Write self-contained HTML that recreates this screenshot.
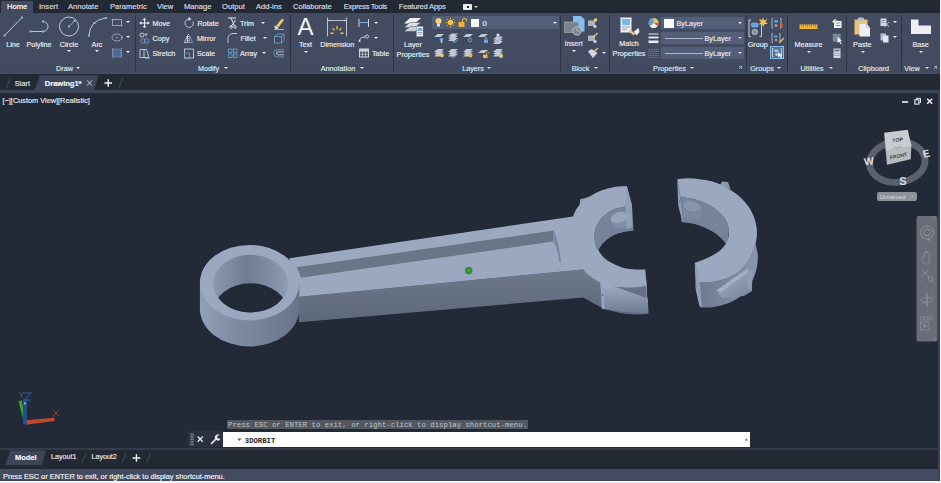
<!DOCTYPE html>
<html><head><meta charset="utf-8"><title>AutoCAD</title>
<style>
html,body{margin:0;padding:0;}
body{width:941px;height:483px;overflow:hidden;background:#222937;position:relative;font-family:"Liberation Sans","DejaVu Sans",sans-serif;color:#e6e9ee;font-size:7.5px;}
.abs{position:absolute;}
.lbl,.txt,.ptitle,#menubar span{-webkit-text-stroke:0.180px currentColor;}
#menubar{left:0;top:0;width:941px;height:13px;background:#222933;}
#menubar span{position:absolute;top:2px;font-size:7.6px;line-height:9px;color:#d6dae0;white-space:nowrap;}
#hometab{left:1px;top:1px;width:32px;height:12px;background:#424b60;}
#ribbon{left:0;top:13px;width:941px;height:61px;background:#424b60;}
#ribtitle{left:0;top:62px;width:941px;height:12px;background:#414a5f;}
.sep{position:absolute;top:15px;width:1px;height:57px;background:#2d3442;}
.lbl{position:absolute;font-size:7.2px;line-height:9px;color:#e6e9ee;white-space:nowrap;transform:translateX(-50%);text-align:center;}
.txt{position:absolute;font-size:7.2px;line-height:9px;color:#e6e9ee;white-space:nowrap;}
.ptitle{position:absolute;top:63.5px;font-size:7.2px;line-height:9px;color:#dfe3e9;white-space:nowrap;transform:translateX(-50%);}
.dds{position:absolute;width:0;height:0;border-left:2px solid transparent;border-right:2px solid transparent;border-top:2.400px solid #f0f2f5;margin-left:-0.400px;margin-top:-0.200px;}
.dd{position:absolute;width:0;height:0;border-left:2px solid transparent;border-right:2px solid transparent;border-top:2.5px solid #e6e9ee;}
#filetabs{left:0;top:74px;width:941px;height:16px;background:#222933;}
#band{left:0;top:90px;width:941px;height:3px;background:#3d4658;}
#viewport{left:0;top:93px;width:938.500px;height:355px;background:#222937;box-sizing:border-box;width:941px;height:356px;}
#layouttabs{left:0;top:450px;width:941px;height:19.500px;background:#222933;}
#status{left:0;top:468.500px;width:941px;height:12.800px;background:#424b5f;}
#whiteline{left:0;top:481.200px;width:941px;height:1.800px;background:#f2f3f5;}
</style></head>
<body>
<!-- MENUBAR -->
<div id="menubar" class="abs">
 <div id="hometab" class="abs"></div>
 <span style="left:7px;color:#fff">Home</span>
 <span style="left:39px">Insert</span>
 <span style="left:68px">Annotate</span>
 <span style="left:110px">Parametric</span>
 <span style="left:157px">View</span>
 <span style="left:184px">Manage</span>
 <span style="left:222px">Output</span>
 <span style="left:256px">Add-ins</span>
 <span style="left:293px">Collaborate</span>
 <span style="left:343.800px;letter-spacing:-0.3px">Express Tools</span>
 <span style="left:398.800px;letter-spacing:-0.2px">Featured Apps</span>
</div>
<!-- RIBBON -->
<div id="ribbon" class="abs"></div>
<div id="ribtitle" class="abs"></div>

<!-- separators -->
<div class="sep" style="left:135px"></div>
<div class="sep" style="left:290px"></div>
<div class="sep" style="left:393px"></div>
<div class="sep" style="left:560px"></div>
<div class="sep" style="left:609px"></div>
<div class="sep" style="left:745.5px"></div>
<div class="sep" style="left:786.5px"></div>
<div class="sep" style="left:846px"></div>
<div class="sep" style="left:901px"></div>
<!-- DRAW PANEL -->
<svg class="abs" style="left:0;top:13px" width="136" height="50" viewBox="0 13 136 50" fill="none">
 <line x1="4.5" y1="35.5" x2="22" y2="17.5" stroke="#d0d6df" stroke-width="0.900"/>
 <rect x="3.5" y="34.5" width="2" height="2" fill="#7fb6e6"/><rect x="21" y="16.5" width="2" height="2" fill="#7fb6e6"/>
 <path d="M30.5 31.5 H43 A5 5 0 0 0 43 21.5" stroke="#d0d6df" stroke-width="0.900"/>
 <rect x="29.5" y="30.500" width="2" height="2" fill="#7fb6e6"/><rect x="42" y="30.500" width="2" height="2" fill="#7fb6e6"/><rect x="42" y="20.500" width="2" height="2" fill="#7fb6e6"/>
 <circle cx="69" cy="26.500" r="9.5" stroke="#d0d6df" stroke-width="0.900"/>
 <line x1="69" y1="26.500" x2="74.500" y2="21" stroke="#7fb6e6" stroke-width="1"/>
 <rect x="68" y="25.500" width="2" height="2" fill="#7fb6e6"/><rect x="73.500" y="20" width="2" height="2" fill="#7fb6e6"/>
 <path d="M89 35.500 Q90 20 106 18" stroke="#d0d6df" stroke-width="0.900"/>
 <rect x="88" y="34.500" width="2" height="2" fill="#7fb6e6"/><rect x="93.500" y="22" width="2" height="2" fill="#7fb6e6"/><rect x="105" y="17" width="2" height="2" fill="#7fb6e6"/>
 <rect x="112.500" y="19.500" width="9" height="6" stroke="#bcc5d2" stroke-width="0.700"/>
 <rect x="111.800" y="18.800" width="1.500" height="1.500" fill="#7fb6e6"/><rect x="120.800" y="24.800" width="1.500" height="1.500" fill="#7fb6e6"/>
 <ellipse cx="117" cy="37.500" rx="5" ry="3.500" stroke="#bcc5d2" stroke-width="0.700"/>
 <rect x="116.300" y="36.800" width="1.400" height="1.400" fill="#7fb6e6"/><rect x="121.300" y="36.800" width="1.400" height="1.400" fill="#7fb6e6"/>
 <rect x="113.500" y="49" width="7" height="8" fill="#46689a" stroke="#8ea4c0" stroke-width="0.800" stroke-dasharray="1 1"/>
 <line x1="112.500" y1="48" x2="112.500" y2="58" stroke="#aab4c3" stroke-width="0.800" stroke-dasharray="1.500 0.700"/><line x1="121.500" y1="48" x2="121.500" y2="58" stroke="#aab4c3" stroke-width="0.800" stroke-dasharray="1.500 0.700"/>
</svg>
<div class="lbl" style="left:13px;top:40px">Line</div>
<div class="lbl" style="left:39px;top:40px">Polyline</div>
<div class="lbl" style="left:69px;top:40px">Circle</div>
<div class="lbl" style="left:97px;top:40px">Arc</div>
<div class="dds" style="left:67.4px;top:50.2px"></div>
<div class="dds" style="left:95.4px;top:50.2px"></div>
<div class="dds" style="left:126.4px;top:21.5px"></div>
<div class="dds" style="left:126.4px;top:36.5px"></div>
<div class="dds" style="left:126.4px;top:51.5px"></div>
<div class="ptitle" style="left:64.500px">Draw</div><div class="dd" style="left:76px;top:67px"></div>
<!-- MODIFY PANEL -->
<div class="txt" style="left:152.500px;top:18.500px">Move</div>
<div class="txt" style="left:152.500px;top:33.500px">Copy</div>
<div class="txt" style="left:152.500px;top:48.500px">Stretch</div>
<div class="txt" style="left:197.500px;top:18.500px">Rotate</div>
<div class="txt" style="left:197px;top:33.500px">Mirror</div>
<div class="txt" style="left:197px;top:48.500px">Scale</div>
<div class="txt" style="left:240px;top:18.500px">Trim</div>
<div class="txt" style="left:240.500px;top:33.500px">Fillet</div>
<div class="txt" style="left:240px;top:48.500px">Array</div>
<div class="dds" style="left:261.4px;top:22.5px"></div>
<div class="dds" style="left:263.4px;top:37.5px"></div>
<div class="dds" style="left:262.4px;top:52.5px"></div>
<div class="ptitle" style="left:208.500px">Modify</div><div class="dd" style="left:224px;top:67px"></div>
<svg class="abs" style="left:136px;top:13px" width="155" height="50" viewBox="136 13 155 50" fill="none">
 <!-- move -->
 <path d="M144.500 19 V27 M140.500 23 H148.500" stroke="#f0f3f7" stroke-width="1.100"/>
 <path d="M144.500 17.800 L146.300 20 H142.700 Z M144.500 28.200 L146.300 26 H142.700 Z M139.300 23 L141.500 21.200 V24.800 Z M149.700 23 L147.500 21.200 V24.800 Z" fill="#f0f3f7"/>
 <!-- copy -->
 <circle cx="142" cy="35" r="2" stroke="#dfe5ee" stroke-width="0.800"/><circle cx="146" cy="34.500" r="1" stroke="#dfe5ee" stroke-width="0.700"/>
 <circle cx="143" cy="41" r="2.300" stroke="#74a9d8" stroke-width="0.750"/><circle cx="146.500" cy="41" r="2.300" stroke="#74a9d8" stroke-width="0.750"/>
 <!-- stretch -->
 <path d="M140 49.500 H144 V57.500 H140 Z" stroke="#dfe5ee" stroke-width="0.750"/>
 <path d="M144 49.500 H146.500 L149 57.500 H144" stroke="#dfe5ee" stroke-width="0.750"/>
 <path d="M145 58.500 H150" stroke="#74a9d8" stroke-width="0.800"/>
 <!-- rotate -->
 <path d="M189.500 19 A4.200 4.200 0 1 0 193 21.500" stroke="#d3d9e3" stroke-width="0.850"/>
 <path d="M188.500 17 L191.500 19 L188.500 21 Z" fill="#dfe5ee"/>
 <!-- mirror -->
 <path d="M188.500 34 V43" stroke="#dfe5ee" stroke-width="0.700" stroke-dasharray="1 1"/>
 <path d="M187.500 35.500 L184.500 42.500 H187.500 Z" stroke="#dfe5ee" stroke-width="0.800"/>
 <path d="M189.500 35.500 L192.500 42.500 H189.500 Z" stroke="#74a9d8" stroke-width="0.800"/>
 <!-- scale -->
 <rect x="184.500" y="49" width="9" height="9" stroke="#dfe5ee" stroke-width="0.750"/>
 <rect x="184.500" y="53" width="5" height="5" stroke="#74a9d8" stroke-width="0.750"/>
 <!-- trim -->
 <path d="M228 18 H236 M231 18 L234.500 26 M235.500 20 L231 27" stroke="#e8ecf2" stroke-width="1"/>
 <circle cx="231" cy="27" r="1.300" stroke="#e8ecf2" stroke-width="0.800"/><circle cx="235" cy="27" r="1.300" stroke="#e8ecf2" stroke-width="0.800"/>
 <!-- fillet -->
 <path d="M228 43 V38.500 A5 5 0 0 1 233 33.500 H237" stroke="#d3d9e3" stroke-width="0.850"/>
 <!-- array -->
 <rect x="228.500" y="49" width="3.500" height="3.500" stroke="#74a9d8" stroke-width="0.750"/><rect x="233.500" y="49" width="3.500" height="3.500" stroke="#74a9d8" stroke-width="0.750"/>
 <rect x="228.500" y="54" width="3.500" height="3.500" stroke="#74a9d8" stroke-width="0.750"/><rect x="233.500" y="54" width="3.500" height="3.500" stroke="#74a9d8" stroke-width="0.750"/>
 <!-- erase -->
 <path d="M276 26 L282 18.500 L284 20 L278.500 27.500 Z" fill="#f2c36b"/>
 <path d="M275 25.500 L278.500 28 L277 29 L274.500 28 Z" fill="#f4f4f4"/>
 <path d="M274 29.500 H284" stroke="#dfe5ee" stroke-width="0.700"/>
 <!-- explode -->
 <path d="M274.500 36.500 H281.500 V43 H274.500 Z M274.500 36.500 L277 34 H284 V40.500 L281.500 43 M281.500 36.500 L284 34" stroke="#74a9d8" stroke-width="0.750"/>
 <!-- offset -->
 <path d="M284 49.500 H277.500 A3.700 3.700 0 0 0 277.500 57 H284" stroke="#74a9d8" stroke-width="0.750"/>
 <path d="M284 51.800 H278 A1.500 1.500 0 0 0 278 54.800 H284" stroke="#dfe5ee" stroke-width="0.750"/>
</svg>

<!-- ANNOTATION PANEL -->
<div class="abs" style="left:297.500px;top:12.500px;font-size:24px;line-height:28px;color:#f2f4f7">A</div>
<div class="lbl" style="left:305.500px;top:40px">Text</div><div class="dds" style="left:303.9px;top:50.7px"></div>
<div class="lbl" style="left:337.200px;top:40px">Dimension</div>
<div class="txt" style="left:372px;top:48.500px">Table</div>
<div class="dds" style="left:373.9px;top:22.5px"></div><div class="dds" style="left:373.9px;top:37.5px"></div>
<div class="ptitle" style="left:338px">Annotation</div><div class="dd" style="left:360px;top:67px"></div>
<svg class="abs" style="left:291px;top:13px" width="102" height="50" viewBox="291 13 102 50" fill="none">
 <path d="M327.500 17.500 V36.500 M346.500 17.500 V36.500 M328 20.500 H346" stroke="#c9d0da" stroke-width="0.900"/>
 <path d="M328 20.500 l2 -1 v2 Z M346 20.500 l-2 -1 v2 Z" fill="#c9d0da"/>
 <path d="M337 26 V29.500 M332.800 28 L334.500 30.500 M341.200 28 L339.500 30.500 M330.500 33 L333.500 33.500 M343.500 33 L340.500 33.500" stroke="#f5c04a" stroke-width="1.300"/>
 <path d="M359 19 V27 M368.500 19 V27" stroke="#dfe5ee" stroke-width="0.900"/><path d="M359.500 22.500 H368" stroke="#7fb6e6" stroke-width="0.900"/>
 <path d="M359.500 41 Q360 36.500 365.500 37" stroke="#dfe5ee" stroke-width="0.900"/><circle cx="367" cy="36.500" r="1.600" stroke="#dfe5ee" stroke-width="0.800"/><path d="M358.500 42 l0.500 -2.500 l2 2 Z" fill="#dfe5ee"/>
 <rect x="359.500" y="49" width="9" height="8" stroke="#dfe5ee" stroke-width="0.900"/><path d="M359.500 51.500 H368.500 M359.500 54.200 H368.500 M362.500 51.500 V57 M365.500 51.500 V57" stroke="#dfe5ee" stroke-width="0.600"/><rect x="359.500" y="49" width="9" height="2" fill="#c9d0da"/>
</svg>
<!-- LAYERS PANEL -->
<div class="lbl" style="left:413px;top:40px">Layer</div>
<div class="lbl" style="left:413px;top:49.500px">Properties</div>
<div class="abs" style="left:432px;top:16px;width:126.500px;height:13px;background:#535e78"></div>
<div class="abs" style="left:470.800px;top:18.600px;width:8.300px;height:8.500px;background:#fafafa"></div>
<div class="txt" style="left:482.500px;top:18.500px;font-size:7.6px">0</div>
<div class="dd" style="left:553px;top:21.500px"></div>
<div class="ptitle" style="left:473px">Layers</div><div class="dd" style="left:486.500px;top:67px"></div>
<svg class="abs" style="left:394px;top:13px" width="166" height="50" viewBox="394 13 166 50" fill="none">
 <!-- layer props icon -->
 <path d="M404 23.500 L410 18 H421 L415 23.500 Z" fill="#eef0f3"/>
 <path d="M404 27.500 L410 22.500 H421 L415 27.500 Z" fill="#dcdfe5" stroke="#424b60" stroke-width="0.500"/>
 <path d="M404 31.500 L410 26.500 H421 L415 31.500 Z" fill="#c9ced6" stroke="#424b60" stroke-width="0.500"/>
 <rect x="416.500" y="26.500" width="6.500" height="10" fill="#f4f5f7" stroke="#8a94a6" stroke-width="0.500"/><rect x="417.500" y="28" width="4.500" height="3" fill="#6aa7e0"/><path d="M417.500 32.500 H422 M417.500 34.200 H422" stroke="#6b7485" stroke-width="0.600"/>
 <!-- dropdown icons -->
 <circle cx="438.500" cy="21" r="3" fill="#f5d37c"/><rect x="437" y="24" width="3" height="2.500" fill="#e9e2c8"/>
 <circle cx="450.500" cy="22.500" r="2.800" fill="#f3c14e"/><path d="M450.500 17.800 V19 M450.500 26 V27.200 M445.800 22.500 H447 M454 22.500 H455.200 M447.200 19.200 L448 20 M453 25 L453.800 25.800 M453.800 19.200 L453 20 M447.200 25.800 L448 25" stroke="#f7b731" stroke-width="1"/>
 <rect x="458.500" y="22" width="6" height="5" fill="#f3b13a"/><path d="M462.500 22 V20.500 A2 2 0 0 1 466.500 20.500 V21.500" stroke="#f3b13a" stroke-width="1.100"/>
 <!-- row 1 icons -->
 
 <path transform="translate(434 33.500)" d="M0 3.500 L3.500 0.500 H10 L6.500 3.500 Z" fill="#c3c9d3"/><circle cx="441.500" cy="39.500" r="1.800" fill="#6aa7e0"/><rect x="440.800" y="41" width="1.500" height="1.800" fill="#dfe3e9"/>
 <path transform="translate(448 33)" d="M0 3.500 L3.500 0.500 H10 L6.500 3.500 Z" fill="#c3c9d3"/><path transform="translate(448 35.300)" d="M0 3.500 L3.500 0.500 H10 L6.500 3.500 Z" fill="#c3c9d3"/><path transform="translate(448 37.600)" d="M0 3.500 L3.500 0.500 H10 L6.500 3.500 Z" fill="#c3c9d3"/><path d="M452 41 l3 1.500 l3 -3" stroke="#6aa7e0" stroke-width="1"/>
 <path transform="translate(463 33.500)" d="M0 3.500 L3.500 0.500 H10 L6.500 3.500 Z" fill="#c3c9d3"/><circle cx="470" cy="40" r="1.800" stroke="#6aa7e0" stroke-width="0.900"/>
 <path transform="translate(478 33.500)" d="M0 3.500 L3.500 0.500 H10 L6.500 3.500 Z" fill="#c3c9d3"/><rect x="484" y="39.500" width="4" height="3.500" fill="#6aa7e0"/><path d="M485 39.500 V38.500 A1 1 0 0 1 487 38.500 V39.500" stroke="#6aa7e0" stroke-width="0.800"/>
 <path transform="translate(493 36)" d="M0 3.500 L3.500 0.500 H10 L6.500 3.500 Z" fill="#c3c9d3"/><path transform="translate(493 38.300)" d="M0 3.500 L3.500 0.500 H10 L6.500 3.500 Z" fill="#c3c9d3"/><path transform="translate(493 40.600)" d="M0 3.500 L3.500 0.500 H10 L6.500 3.500 Z" fill="#c3c9d3"/><circle cx="498" cy="35" r="1.600" fill="#dfe3e9"/><path d="M496 40 l2 1.500 l4 -4" stroke="#6aa7e0" stroke-width="0.900"/>
 <!-- row 2 icons -->
 <path transform="translate(434 48.500)" d="M0 3.500 L3.500 0.500 H10 L6.500 3.500 Z" fill="#c3c9d3"/><path transform="translate(434 50.800)" d="M0 3.500 L3.500 0.500 H10 L6.500 3.500 Z" fill="#c3c9d3"/><path transform="translate(434 53.100)" d="M0 3.500 L3.500 0.500 H10 L6.500 3.500 Z" fill="#c3c9d3"/><circle cx="442" cy="55.500" r="1.800" fill="#f7c95a"/>
 <path transform="translate(448 48.500)" d="M0 3.500 L3.500 0.500 H10 L6.500 3.500 Z" fill="#c3c9d3"/><path transform="translate(448 50.800)" d="M0 3.500 L3.500 0.500 H10 L6.500 3.500 Z" fill="#c3c9d3"/><path transform="translate(448 53.100)" d="M0 3.500 L3.500 0.500 H10 L6.500 3.500 Z" fill="#c3c9d3"/><path d="M451 56.500 l3 1 l3 -3" stroke="#6aa7e0" stroke-width="1"/>
 <path transform="translate(463 48.500)" d="M0 3.500 L3.500 0.500 H10 L6.500 3.500 Z" fill="#c3c9d3"/><path transform="translate(463 50.800)" d="M0 3.500 L3.500 0.500 H10 L6.500 3.500 Z" fill="#c3c9d3"/><path transform="translate(463 53.100)" d="M0 3.500 L3.500 0.500 H10 L6.500 3.500 Z" fill="#c3c9d3"/><circle cx="470.500" cy="55.500" r="2" fill="#f7b731"/>
 <path transform="translate(478 49.500)" d="M0 3.500 L3.500 0.500 H10 L6.500 3.500 Z" fill="#c3c9d3"/><rect x="483" y="54.500" width="4.500" height="3.500" fill="#f3b13a"/><path d="M486.500 54.500 V53.500 A1.200 1.200 0 0 1 489 53.500" stroke="#f3b13a" stroke-width="0.800"/>
 <path transform="translate(493 48.500)" d="M0 3.500 L3.500 0.500 H10 L6.500 3.500 Z" fill="#c3c9d3"/><path transform="translate(493 50.800)" d="M0 3.500 L3.500 0.500 H10 L6.500 3.500 Z" fill="#c3c9d3"/><path transform="translate(493 53.100)" d="M0 3.500 L3.500 0.500 H10 L6.500 3.500 Z" fill="#c3c9d3"/><circle cx="501" cy="56" r="2" fill="#f0c27a"/>
</svg>
<!-- BLOCK PANEL -->
<div class="lbl" style="left:573.700px;top:39px">Insert</div><div class="dds" style="left:571.9px;top:49.7px"></div>
<div class="dds" style="left:602.4px;top:52.5px"></div>
<div class="ptitle" style="left:580.500px">Block</div><div class="dd" style="left:593.500px;top:67px"></div>
<svg class="abs" style="left:561px;top:13px" width="48" height="50" viewBox="561 13 48 50" fill="none">
 <path d="M573 16 H581 L584.500 19.500 V31.500 H573 Z" fill="#82bff0"/>
 <rect x="564.500" y="22" width="14" height="10.500" fill="#7b8391" stroke="#aab1bd" stroke-width="0.600"/>
 <circle cx="577" cy="31" r="4.200" fill="#7e8694" stroke="#c5cbd4" stroke-width="0.800"/><path d="M577 31 V28 M577 31 H580" stroke="#c5cbd4" stroke-width="0.700"/>
 <rect x="588" y="20.500" width="7" height="5.500" fill="#aab1bd"/><circle cx="595.500" cy="20" r="1.800" fill="#f3c777"/><circle cx="595" cy="26.500" r="1.700" fill="#c5cbd4"/>
 <rect x="588" y="35.500" width="7" height="5.500" fill="#aab1bd"/><path d="M593.500 37 L597.500 33" stroke="#f3c777" stroke-width="1.300"/><circle cx="595" cy="41.500" r="1.700" fill="#c5cbd4"/>
 <path d="M588 51.500 L591.500 49 L597.500 53 L593 58 Z" fill="#d4d9e0"/><path d="M593.500 52 L598 48" stroke="#f3c777" stroke-width="1.300"/>
</svg>

<!-- PROPERTIES PANEL -->
<div class="lbl" style="left:629px;top:39px">Match</div>
<div class="lbl" style="left:629px;top:49px">Properties</div>
<div class="abs" style="left:660.500px;top:17px;width:83px;height:12px;background:#535e78"></div>
<div class="abs" style="left:660.500px;top:32px;width:83px;height:12px;background:#535e78"></div>
<div class="abs" style="left:660.500px;top:47px;width:83px;height:12px;background:#535e78"></div>
<div class="abs" style="left:664px;top:18.500px;width:10px;height:9px;background:#fafafa"></div>
<div class="txt" style="left:676.500px;top:18.500px">ByLayer</div>
<div class="abs" style="left:664.500px;top:37.500px;width:38.500px;height:1px;background:#aeb6c4"></div>
<div class="txt" style="left:704.500px;top:33.500px">ByLayer</div>
<div class="abs" style="left:664.500px;top:52.500px;width:38.500px;height:1px;background:#aeb6c4"></div>
<div class="txt" style="left:704.500px;top:48.500px">ByLayer</div>
<div class="dd" style="left:738px;top:22px"></div><div class="dd" style="left:738px;top:37px"></div><div class="dd" style="left:738px;top:52px"></div>
<div class="ptitle" style="left:669.500px">Properties</div><div class="dd" style="left:689.500px;top:67px"></div>
<svg class="abs" style="left:610px;top:13px" width="136" height="61" viewBox="610 13 136 61" fill="none">
 <rect x="620.500" y="17.500" width="11" height="15" fill="#eceef2" stroke="#9aa3b2" stroke-width="0.500"/>
 <rect x="622" y="19" width="8" height="6" fill="#79b8ee"/><path d="M622 27 H630 M622 29.200 H627" stroke="#7b8494" stroke-width="0.700"/>
 <path d="M629.500 30.500 L634.500 34.500" stroke="#f0c27a" stroke-width="2.600"/><path d="M634 31.500 L638.500 28 L639.500 32 L636.500 35.500 Z" fill="#f4f5f7"/>
 <circle cx="653.700" cy="23" r="5" fill="#e9c46a"/><path d="M653.700 18 A5 5 0 0 0 650 26.500 L653.700 23 Z" fill="#5aa0e0"/><path d="M653.700 23 L657.500 26.200 A5 5 0 0 0 658.700 23 Z" fill="#d9574a"/><path d="M653.700 23 L650 26.500 A5 5 0 0 0 657.500 26.200 Z" fill="#eef0f3"/>
 <path d="M648.500 34 H658.500" stroke="#e8ebf0" stroke-width="1"/><path d="M648.500 37.500 H658.500" stroke="#e8ebf0" stroke-width="1.800"/><path d="M648.500 41.800 H658.500" stroke="#e8ebf0" stroke-width="2.600"/>
 <path d="M648.500 49.500 H658.500 M648.500 51.500 H658.500" stroke="#8c95a5" stroke-width="0.800" stroke-dasharray="1.500 0.800"/><path d="M648.500 53.500 H658.500 M648.500 55.500 H658.500 M648.500 57.500 H658.500" stroke="#8c95a5" stroke-width="0.800" stroke-dasharray="0.800 0.800"/>
 <path d="M739 66.500 h2.500 v2.500 M739 69 l2.500 -2.500" stroke="#c5cbd4" stroke-width="0.700"/>
</svg>
<!-- GROUPS PANEL -->
<div class="lbl" style="left:757.700px;top:39.500px">Group</div>
<div class="ptitle" style="left:762px">Groups</div><div class="dd" style="left:777px;top:67px"></div>
<div class="abs" style="left:770px;top:46px;width:14px;height:13px;background:#4f7093;border:1px solid #86bce8;box-sizing:border-box"></div>
<svg class="abs" style="left:746px;top:13px" width="41" height="50" viewBox="746 13 41 50" fill="none">
 <path d="M751 20 H749 V36.500 H751 M759.500 20 H761.500 V36.500 H759.500" stroke="#c5cbd4" stroke-width="1"/>
 <rect x="751.500" y="23" width="6.500" height="4" rx="1" fill="#5e9fdc" stroke="#a9d0f2" stroke-width="0.500"/>
 <circle cx="754.800" cy="32" r="2.800" fill="#8a92a0" stroke="#c5cbd4" stroke-width="0.700"/>
 <path d="M763 17 L764 20.500 L767.500 19 L765.500 22 L768 24 L764.500 24 L763.500 27 L762 24 L758.500 24.500 L761 22 L759 19.500 L762 20.500 Z" fill="#f7c04f"/>
 <path d="M773 18.500 H772 V28 H773 M780 18.500 H781 V28 H780" stroke="#c5cbd4" stroke-width="0.800"/><rect x="774" y="20" width="4" height="2.500" fill="#5e9fdc"/><circle cx="776" cy="25.500" r="1.500" fill="#9aa2b0"/><path d="M780 24 l3 3 M783 24 l-3 3" stroke="#e06a4a" stroke-width="0.900"/>
 <path d="M773 33.500 H772 V42.500 H773 M779 33.500 H780 V42.500 H779" stroke="#c5cbd4" stroke-width="0.800"/><rect x="774" y="35.500" width="3.500" height="2" fill="#5e9fdc"/><circle cx="776" cy="40" r="1.300" fill="#9aa2b0"/><path d="M779.500 42.500 L784 38" stroke="#f0b858" stroke-width="1.400"/>
 <path d="M773.500 48.500 H772.500 V56.500 H773.500 M780.500 48.500 H781.500 V56.500 H780.500" stroke="#dfe5ee" stroke-width="0.800"/><rect x="774.500" y="49.500" width="4" height="2.500" fill="#9ec8ee"/><circle cx="776.500" cy="54.500" r="1.400" fill="#c5cbd4"/><path d="M778 52 V57.500 L779.500 56 L781 58.500 L782 58 L780.500 55.500 H782.500 Z" fill="#f4f5f7"/>
</svg>
<!-- UTILITIES PANEL -->
<div class="lbl" style="left:808.500px;top:40px">Measure</div><div class="dds" style="left:806.9px;top:50.7px"></div>
<div class="ptitle" style="left:812px">Utilities</div><div class="dd" style="left:829px;top:67px"></div>
<svg class="abs" style="left:787px;top:13px" width="59" height="50" viewBox="787 13 59 50" fill="none">
 <rect x="799.500" y="24.500" width="18" height="4.500" fill="#f0b23c"/><path d="M801.500 24.500 v2 M803.500 24.500 v3 M805.500 24.500 v2 M807.500 24.500 v3 M809.500 24.500 v2 M811.500 24.500 v3 M813.500 24.500 v2 M815.500 24.500 v3" stroke="#a86f14" stroke-width="0.700"/>
 <rect x="834" y="21" width="7.500" height="7" fill="#eef0f3"/><path d="M836 23 H840 M836 25.500 H840" stroke="#4a90d9" stroke-width="0.900"/><path d="M832 21.500 L835.500 18.500 V20.500 H838 V22.500 H835.500 V24.500 Z" fill="#f2e2b8"/>
 <rect x="833" y="34" width="7.500" height="7.500" fill="#7d8696" stroke="#5fae6a" stroke-width="0.700" stroke-dasharray="1 1"/><path d="M837.500 36.500 V43 L839 41.500 L840.500 44 L841.500 43.500 L840 41 H842 Z" fill="#f4f5f7"/>
 <rect x="833.500" y="48.500" width="7" height="9.500" fill="#d5d9e0"/><rect x="834.500" y="49.500" width="5" height="2" fill="#6b7485"/><path d="M834.500 53.500 H839.500 M834.500 55.500 H839.500" stroke="#6b7485" stroke-width="0.900" stroke-dasharray="1 1"/>
</svg>
<!-- CLIPBOARD PANEL -->
<div class="lbl" style="left:862.300px;top:40px">Paste</div><div class="dds" style="left:860.9px;top:50.7px"></div>
<div class="dds" style="left:893.4px;top:21.5px"></div><div class="dds" style="left:893.4px;top:36.5px"></div>
<div class="ptitle" style="left:873.700px">Clipboard</div>
<svg class="abs" style="left:847px;top:13px" width="54" height="50" viewBox="847 13 54 50" fill="none">
 <rect x="854.500" y="19.500" width="13" height="15" fill="#e9c27e"/><rect x="858" y="17.500" width="6" height="3.500" rx="1" fill="#b9c0cb"/>
 <path d="M859.500 24 H866.500 L870 27.500 V36.500 H859.500 Z" fill="#eef0f3"/><path d="M866.500 24 V27.500 H870" stroke="#aab1bd" stroke-width="0.600"/>
 <rect x="880.500" y="18.500" width="6" height="7.500" fill="#d5d9e0"/><path d="M881.500 20.500 H885.500 M881.500 22.500 H885.500" stroke="#6b7485" stroke-width="0.700"/><path d="M884.500 22 L889 27 M889 22 L884.500 27" stroke="#c5cbd4" stroke-width="0.900"/>
 <rect x="880.500" y="33.500" width="5.500" height="7" fill="#b9c0cb"/><rect x="883" y="35.500" width="5.500" height="7" fill="#e3e6eb"/>
</svg>
<!-- VIEW PANEL -->
<div class="lbl" style="left:920.600px;top:40px">Base</div><div class="dds" style="left:918.9px;top:50.7px"></div>
<div class="ptitle" style="left:912px">View</div><div class="dd" style="left:924.500px;top:67px"></div>
<svg class="abs" style="left:902px;top:13px" width="39" height="61" viewBox="902 13 39 61" fill="none">
 <path d="M911 19.500 H918.500 V25.500 H931 V34 H911 Z" fill="#eceef1"/>
 <path d="M934 66.500 h2.500 v2.500 M934 69 l2.500 -2.500" stroke="#c5cbd4" stroke-width="0.700"/>
</svg>
<!-- menubar small icon -->
<div class="abs" style="left:463px;top:4px;width:9px;height:5.500px;background:#e8ebf0;border-radius:1px"></div>
<div class="abs" style="left:466.500px;top:5.500px;width:2px;height:2px;background:#222933"></div>
<div class="dd" style="left:474px;top:6px;border-top-color:#c5cbd4"></div>
<!--PANELS4-->
<!-- FILETABS -->
<div id="filetabs" class="abs"></div>
<div id="band" class="abs"></div>
<svg class="abs" style="left:0;top:74px" width="941" height="19" viewBox="0 74 941 19" fill="none">
 <path d="M34.500 90 L40 75.200 H98.800 L94 90 Z" fill="#3d4658"/>
 <path d="M6.200 88.500 L10.400 78" stroke="#4a5366" stroke-width="0.800"/>
 <path d="M118.800 88.500 L122.500 78" stroke="#4a5366" stroke-width="0.800"/>
 <path d="M87 80.300 L92 85.500 M92 80.300 L87 85.500" stroke="#d5dae2" stroke-width="0.900"/>
 <path d="M104.500 83 H112 M108.250 79.300 V86.700" stroke="#f0f3f7" stroke-width="1.400"/>
</svg>
<div class="txt" style="left:14.800px;top:78.500px;font-size:7.200px;color:#dfe3e9">Start</div>
<div class="txt" style="left:44.800px;top:78.500px;font-size:7.500px;font-weight:bold;color:#f4f6f9">Drawing1*</div>
<!-- VIEWPORT -->
<div id="viewport" class="abs"></div>
<div class="txt" style="left:2.500px;top:95.500px;font-size:7.350px;color:#e2e6ec">[−][Custom View][Realistic]</div>
<svg class="abs" style="left:0;top:93px" width="941" height="356" viewBox="0 93 941 356">
<defs>
<linearGradient id="gRing" x1="0" x2="1" y1="0" y2="0"><stop offset="0" stop-color="#919fb7"/><stop offset="0.35" stop-color="#7f8ca3"/><stop offset="0.75" stop-color="#717d92"/><stop offset="1" stop-color="#687489"/></linearGradient>
<linearGradient id="gSide" x1="0" x2="0" y1="0" y2="1"><stop offset="0" stop-color="#6e788b"/><stop offset="1" stop-color="#5d6879"/></linearGradient>
<linearGradient id="gIn" x1="0" x2="1" y1="0" y2="0"><stop offset="0" stop-color="#8b99b0"/><stop offset="0.45" stop-color="#707c91"/><stop offset="1" stop-color="#8d9bb2"/></linearGradient>
<linearGradient id="gCapO" x1="0" x2="1" y1="0" y2="0"><stop offset="0" stop-color="#6e7a8f"/><stop offset="1" stop-color="#8a97ae"/></linearGradient>
<linearGradient id="gBoss" x1="0" x2="0" y1="0" y2="1"><stop offset="0" stop-color="#a3b0c7"/><stop offset="0.45" stop-color="#8b98af"/><stop offset="1" stop-color="#6f7b90"/></linearGradient>
<linearGradient id="gBoss2" x1="0" x2="1" y1="0" y2="1"><stop offset="0" stop-color="#a0adc4"/><stop offset="0.5" stop-color="#8e9bb2"/><stop offset="1" stop-color="#75829a"/></linearGradient>
<clipPath id="cHole"><ellipse cx="250.6" cy="283.6" rx="37.4" ry="28.8"/></clipPath>
</defs>
<!-- big end left half -->
<path d="M632.0 205.4 C630.2 205.7 624.4 206.3 621.0 207.2 C617.6 208.0 614.8 208.9 611.8 210.5 C608.8 212.1 605.5 214.4 603.0 216.8 C600.5 219.2 598.4 222.0 597.0 225.0 C595.6 228.0 594.8 231.6 594.5 234.6 C594.2 237.6 594.6 240.3 595.3 243.0 C596.0 245.7 598.2 249.7 598.8 251.0 L598.8 276.0 C599.7 274.7 597.5 270.7 596.8 268.0 C596.1 265.3 595.7 262.6 596.0 259.6 C596.3 256.6 597.1 253.0 598.5 250.0 C599.9 247.0 602.0 244.2 604.5 241.8 C607.0 239.4 610.3 237.1 613.3 235.5 C616.3 233.9 619.1 233.0 622.5 232.2 C625.9 231.3 631.7 230.7 633.5 230.4 Z" fill="#76839a"/>
<path d="M583.1 269.4 C584.2 270.5 587.0 273.8 589.7 276.0 C592.5 278.2 596.3 281.0 599.6 282.6 C602.9 284.2 605.7 285.1 609.6 285.9 C613.5 286.7 618.4 287.3 622.8 287.6 C627.2 287.9 632.1 287.9 636.1 287.6 C640.1 287.3 644.9 286.2 646.7 285.9 L647.8 314.0 C645.9 314.1 640.6 314.6 636.5 314.5 C632.4 314.4 627.4 314.2 623.0 313.5 C618.6 312.8 613.6 311.5 610.0 310.5 C606.4 309.5 602.8 308.0 601.3 307.5 L583.1 297.5 Z" fill="url(#gSide)"/>
<path d="M298.0 297.0 L583.1 269.4 L590.0 276.0 L590.0 300.0 L583.1 297.5 L299.0 322.3 Z" fill="url(#gSide)"/>
<path d="M579.500 206.500 L580.200 199.300 L586 197.800 L589.500 196.500 L590 203 Z" fill="#939fb7"/>
<path d="M289.4 258.2 L573.1 216.4 C573.6 215.2 575.0 211.3 576.4 209.1 C577.8 206.9 579.2 205.2 581.4 203.1 C583.6 201.0 586.4 198.6 589.7 196.5 C593.0 194.4 597.2 192.1 601.3 190.5 C605.4 188.9 610.2 187.7 614.5 186.9 C618.8 186.1 624.8 186.1 626.8 185.9 L632.0 205.4 C630.2 205.7 624.4 206.3 621.0 207.2 C617.6 208.0 614.8 208.9 611.8 210.5 C608.8 212.1 605.5 214.4 603.0 216.8 C600.5 219.2 598.4 222.0 597.0 225.0 C595.6 228.0 594.8 231.6 594.5 234.6 C594.2 237.6 594.6 240.3 595.3 243.0 C596.0 245.7 596.8 248.1 598.8 251.0 C600.8 253.9 603.5 257.8 607.5 260.6 C611.5 263.4 618.0 266.2 622.8 267.7 C627.6 269.2 632.4 269.1 636.1 269.4 C639.9 269.7 643.8 269.4 645.3 269.4 L646.7 285.9 C644.9 286.2 640.1 287.3 636.1 287.6 C632.1 287.9 627.2 287.9 622.8 287.6 C618.4 287.3 613.5 286.7 609.6 285.9 C605.7 285.1 602.9 284.2 599.6 282.6 C596.3 281.0 592.5 278.2 589.7 276.0 C587.0 273.8 584.2 270.5 583.1 269.4 L298.0 297.0 Z" fill="#9ba8c0"/>
<path d="M296.8 267.3 L553.8 230.6 L553.0 241.5 L301.0 277.8 Z" fill="#6b7588"/>
<path d="M553.8 230.6 C557.5 240 560 250 561.1 262.1 L559.2 262.3 C558 252 556 246 553 241.5 Z" fill="#7c889d"/>
<path d="M626.8 185.9 L632.0 205.4 L632.3 227.0 L626.5 229.0 L625.5 207.0 Z" fill="#919eb6"/>
<path d="M645.3 269.4 L646.7 285.9 L647.8 314.0 L646.3 296.0 Z" fill="#8d9ab1"/>
<ellipse cx="619" cy="217.500" rx="8.500" ry="5.500" transform="rotate(-20 619 217.500)" fill="#98a5bd"/>
<path d="M610.800 221 C615 225.500 622 224 626 218.500 L626 228 C619 230 613 227 610.800 221 Z" fill="#828fa6"/>
<path d="M600.400 282.100 L606.600 283.700 L647.900 298.600 L648.500 313.400 L622.100 311.800 L601.900 308.700 Z" fill="url(#gBoss)"/>
<path d="M600.400 282.100 L603.600 283 L604.600 309.200 L601.900 308.700 Z" fill="#97a4bc"/>
<circle cx="602.300" cy="295" r="1" fill="#5e6b83"/>
<!-- cap -->
<path d="M680.5 197.3 C682.5 197.6 688.4 197.8 692.4 198.8 C696.4 199.8 700.7 201.3 704.7 203.1 C708.7 204.9 712.7 206.9 716.2 209.7 C719.7 212.4 723.4 216.3 725.5 219.6 C727.6 222.9 728.4 226.3 728.8 229.6 C729.2 232.9 728.0 237.8 727.8 239.5 L727.8 264.5 C729.0 262.9 730.2 257.9 729.8 254.6 C729.4 251.3 728.6 247.9 726.5 244.6 C724.4 241.3 720.7 237.4 717.2 234.7 C713.7 231.9 709.7 229.9 705.7 228.1 C701.7 226.3 697.4 224.8 693.4 223.8 C689.4 222.8 683.5 222.6 681.5 222.3 Z" fill="#76839a"/>
<path d="M754.3 218.0 C754.7 219.9 756.4 225.7 756.7 229.6 C757.0 233.5 756.7 237.3 756.0 241.2 C755.3 245.0 754.4 248.8 752.7 252.7 C751.1 256.6 748.6 261.0 746.1 264.3 C743.6 267.6 741.1 270.2 737.8 272.6 C734.5 275.0 730.4 277.1 726.2 278.6 C722.1 280.2 717.4 281.2 712.9 281.9 C708.4 282.6 701.3 282.5 699.0 282.6 L701.0 307.6 C702.3 307.5 709.4 307.6 713.9 306.9 C718.4 306.2 723.1 305.2 727.2 303.6 C731.4 302.1 735.5 300.0 738.8 297.6 C742.1 295.2 744.6 292.6 747.1 289.3 C749.6 286.0 752.1 281.6 753.7 277.7 C755.4 273.8 756.3 270.1 757.0 266.2 C757.7 262.3 758.0 258.5 757.7 254.6 C757.4 250.7 755.7 244.9 755.3 243.0 Z" fill="url(#gCapO)"/>
<path d="M720 185.5 L722 181.500 L728 182 L730.5 189.500 Z" fill="#8c99b0"/>
<path d="M677.2 179.2 C679.0 179.0 684.4 178.2 688.1 178.2 C691.9 178.2 695.8 178.7 699.7 179.2 C703.6 179.7 707.7 180.3 711.3 181.2 C714.9 182.1 717.6 183.1 721.2 184.8 C724.8 186.5 729.5 189.3 732.8 191.5 C736.1 193.7 738.3 195.3 741.1 198.1 C743.9 200.8 747.2 204.7 749.4 208.0 C751.6 211.3 753.1 214.4 754.3 218.0 C755.5 221.6 756.4 225.7 756.7 229.6 C757.0 233.5 756.7 237.3 756.0 241.2 C755.3 245.0 754.4 248.8 752.7 252.7 C751.1 256.6 748.6 261.0 746.1 264.3 C743.6 267.6 741.1 270.2 737.8 272.6 C734.5 275.0 730.4 277.1 726.2 278.6 C722.1 280.2 717.4 281.2 712.9 281.9 C708.4 282.6 701.3 282.5 699.0 282.6 L694.7 262.7 C696.9 261.9 703.6 259.9 708.0 257.7 C712.4 255.5 717.9 252.4 721.2 249.4 C724.5 246.4 726.5 242.8 727.8 239.5 C729.1 236.2 729.2 232.9 728.8 229.6 C728.4 226.3 727.6 222.9 725.5 219.6 C723.4 216.3 719.7 212.4 716.2 209.7 C712.7 206.9 708.7 204.9 704.7 203.1 C700.7 201.3 696.4 199.8 692.4 198.8 C688.4 197.8 682.5 197.6 680.5 197.3 Z" fill="#9ba8c0"/>
<path d="M677.2 179.2 L680.5 197.3 L682.7 222.8 L678.3 206.0 Z" fill="#919eb6"/>
<path d="M694.7 262.7 L699.7 282.6 L702.0 307.4 L699.5 306.5 L695.8 290.0 Z" fill="#939fb7"/>
<circle cx="679.8" cy="201.5" r="1" fill="#66738b"/><circle cx="695.8" cy="286" r="1" fill="#66738b"/>
<ellipse cx="692" cy="206.500" rx="9.500" ry="5" transform="rotate(14 692 206.500)" fill="#8895ac"/>
<path d="M683 209 C688 213.500 697 214.500 702 211 L701.500 218 C694 220 687 218.500 682.800 215.500 Z" fill="#7c899f"/>
<path d="M716 290.500 L748.200 268.500 L752.500 271.500 L752 291 L744 296 L722 298 Z" fill="url(#gBoss2)"/>
<path d="M717 290 L748.200 268.500 L750 270.500 L721 292.500 Z" fill="#a3b0c7"/>
<path d="M748 268.500 L752.500 271 L751.500 291 L747 288 Z" fill="#8f9cb3"/>
<!-- small end ring -->
<path d="M199.900 282.700 V308.700 A49.700 37.800 0 0 0 299.300 308.700 V282.700 Z" fill="url(#gRing)"/>
<ellipse cx="249.600" cy="282.700" rx="49.700" ry="37.800" fill="#9ba8c0"/>
<ellipse cx="250.600" cy="283.600" rx="37.400" ry="28.800" fill="url(#gIn)"/>
<ellipse cx="250.600" cy="312" rx="37.400" ry="28.800" fill="#222937" clip-path="url(#cHole)"/>
<!-- grip -->
<circle cx="468.700" cy="270.600" r="3.700" fill="#2c8a2c"/><circle cx="468.700" cy="270.600" r="2" fill="#36a836"/>
</svg>

<!-- window controls -->
<svg class="abs" style="left:895px;top:95px" width="43" height="14" viewBox="895 95 43 14" fill="none">
 <path d="M902 102 H908.200" stroke="#eef0f4" stroke-width="1.600"/>
 <rect x="914.900" y="99.800" width="4" height="4.300" stroke="#eef0f4" stroke-width="1.100"/><path d="M916.400 99.500 V98.300 H920.500 V102.600 H919.300" stroke="#eef0f4" stroke-width="1"/>
 <path d="M927.200 98.800 L932.200 103.800 M932.200 98.800 L927.200 103.800" stroke="#eef0f4" stroke-width="1.500"/>
</svg>
<!-- viewcube -->
<svg class="abs" style="left:855px;top:120px" width="84" height="90" viewBox="855 120 84 90" fill="none">
 <ellipse cx="897.300" cy="162" rx="27.800" ry="20.300" stroke="#5b616c" stroke-width="6.800" transform="rotate(-6 897.300 162)"/>
 <path d="M884.100 132.800 L907.700 129.800 L911.400 145.200 L885.800 150.400 Z" fill="#c9ccd1"/>
 <path d="M885.800 150.400 L911.400 145.200 L910.700 159.300 L887 164.800 Z" fill="#b7babf"/>
 <path d="M884.100 132.800 L885.800 150.400 L887 164.800 L885.200 147 Z" fill="#9fa3a9"/>
 <path d="M885.800 150.400 L911.400 145.200" stroke="#e1e3e6" stroke-width="0.600"/>
 <text x="897.800" y="141.800" font-family="Liberation Sans,sans-serif" font-size="5.300" font-weight="bold" fill="#3e434b" text-anchor="middle" transform="rotate(-9 897.500 141.300)">TOP</text>
 <text x="898.800" y="157.600" font-family="Liberation Sans,sans-serif" font-size="5" font-weight="bold" fill="#3e434b" text-anchor="middle" transform="rotate(-12 898.800 157.600)">FRONT</text>
 <path d="M893 148.800 l2.500 -1.500 l2 0.800 l2.500 -1.500 l2 0.800" stroke="#8a8e95" stroke-width="0.700"/>
 <text x="869" y="164.800" font-family="Liberation Sans,sans-serif" font-size="10.500" font-weight="bold" fill="#d9dce0" text-anchor="middle" transform="rotate(-8 869 161)">W</text>
 <text x="926.300" y="157.200" font-family="Liberation Sans,sans-serif" font-size="10.500" font-weight="bold" fill="#d9dce0" text-anchor="middle" transform="rotate(-14 926.300 153.400)">E</text>
 <text x="902.800" y="184.800" font-family="Liberation Sans,sans-serif" font-size="11" font-weight="bold" fill="#d9dce0" text-anchor="middle">S</text>
 <rect x="877" y="192" width="40" height="9" rx="2" fill="#8d9199"/>
 <text x="879.500" y="198.800" font-family="Liberation Sans,sans-serif" font-size="6" fill="#d9dce0">Unnamed</text>
 <path d="M910.500 195.500 h3.500 l-1.750 2.500 Z" fill="#a5a9b0"/>
</svg>
<!-- nav bar -->
<svg class="abs" style="left:914px;top:213px" width="25" height="132" viewBox="914 213 25 132" fill="none">
 <rect x="916.500" y="216" width="21" height="125.500" rx="2" fill="#686d77"/>
 <circle cx="934.500" cy="218.500" r="1" stroke="#8b9099" stroke-width="0.500"/><circle cx="934.500" cy="339" r="1" stroke="#8b9099" stroke-width="0.500"/>
 <circle cx="927" cy="232.500" r="6.500" stroke="#8b9099" stroke-width="1"/><circle cx="927" cy="232.500" r="3.500" stroke="#8b9099" stroke-width="1"/><path d="M927 239 l3 3 v-3.500 Z" fill="#8b9099"/>
 <path d="M926.500 244.800 h1.200" stroke="#8b9099" stroke-width="0.800"/>
 <path d="M923.500 262.500 C921.500 260 921 257 922.500 256.500 L924 258.500 V253.500 C924 252.500 925.300 252.500 925.300 253.500 V252 C925.300 251 926.700 251 926.700 252 V253 C926.700 252 928 252 928 253 V254 C928 253.300 929.300 253.300 929.300 254.300 V260 C929.300 262 928.500 263 927.500 264 H924.500 Z" stroke="#8b9099" stroke-width="0.800"/>
 <path d="M921.500 269 L929 277 M929 269 L921.500 277" stroke="#8b9099" stroke-width="0.900"/><circle cx="930.500" cy="279" r="2" stroke="#8b9099" stroke-width="0.900"/><path d="M932 280.500 l2 2" stroke="#8b9099" stroke-width="1"/>
 <path d="M926.500 287.300 h1.200 M926.500 311.300 h1.200" stroke="#8b9099" stroke-width="0.800"/>
 <path d="M927 293 V307" stroke="#8b9099" stroke-width="1.200"/><ellipse cx="927" cy="300" rx="6" ry="2.300" stroke="#8b9099" stroke-width="0.900"/><path d="M929.500 298 l3 -3 M924 302 l-2 2.500" stroke="#8b9099" stroke-width="0.800"/>
 <rect x="920.500" y="317" width="3" height="3" stroke="#8b9099" stroke-width="0.700"/><rect x="925" y="317" width="3" height="3" stroke="#8b9099" stroke-width="0.700"/><rect x="929.500" y="317" width="3" height="3" stroke="#8b9099" stroke-width="0.700"/>
 <rect x="920.500" y="322" width="8.500" height="8" stroke="#8b9099" stroke-width="0.800"/><path d="M923.500 324 V328 L927 326 Z" fill="#8b9099"/>
</svg>
<!-- UCS icon -->
<svg class="abs" style="left:10px;top:385px" width="60" height="50" viewBox="10 385 60 50" fill="none">
 <path d="M23.500 421 L18.500 401.500 L21.800 400 L25 418 Z" fill="#3f9c2f"/>
 <path d="M26 424.800 L54.800 421 L54.300 417.800 L26 420.300 Z" fill="#c0492b"/>
 <rect x="23" y="399" width="4" height="25.500" fill="#214f8f"/>
 <path d="M24 393 H31 L24.500 400 H31" stroke="#214f8f" stroke-width="1.300"/>
 <path d="M18.500 391.500 L21.500 394.500 L24.500 391.500 M21.500 394.500 V397.500" stroke="#4e6b52" stroke-width="0.900"/>
 <path d="M52.500 409.500 L59.500 416.500 M59.500 409.500 L52.500 416.500" stroke="#8c3b2a" stroke-width="1"/>
 <rect x="24" y="402.500" width="1.800" height="1.800" fill="#9fc4ea"/>
</svg>
<!-- command line -->
<div class="abs" style="left:226.800px;top:420.200px;width:301.500px;height:9px;background:#53575f"></div>
<div class="abs" style="left:228px;top:420.800px;font-family:'Liberation Mono','DejaVu Sans Mono',monospace;font-size:7.330px;line-height:9px;color:#bfc3ca;white-space:pre">Press ESC or ENTER to exit, or right-click to display shortcut-menu.</div>
<div class="abs" style="left:188.200px;top:431.200px;width:35.100px;height:16.300px;background:#2b323f"></div>
<div class="abs" style="left:223.200px;top:431.600px;width:526.800px;height:15.500px;background:#fdfdfd"></div>
<div class="abs" style="left:244.800px;top:436.500px;font-family:'Liberation Mono','DejaVu Sans Mono',monospace;font-size:7.250px;font-weight:bold;line-height:9px;color:#22252b;white-space:pre">3DORBIT</div>
<svg class="abs" style="left:188px;top:431px" width="563" height="17" viewBox="188 431 563 17" fill="none">
 <path d="M190.300 434 h3.400 M190.300 435.800 h3.400 M190.300 437.600 h3.400 M190.300 439.400 h3.400 M190.300 441.200 h3.400 M190.300 443 h3.400 M190.300 444.800 h3.400" stroke="#8b919c" stroke-width="0.900"/>
 <path d="M197.600 436.500 L202.800 441.700 M202.800 436.500 L197.600 441.700" stroke="#e6e9ee" stroke-width="1.300"/>
 <path d="M211.500 443.500 L216.500 438.500" stroke="#e6e9ee" stroke-width="1.700" stroke-linecap="round"/>
 <path d="M219.800 435.200 A3 3 0 1 0 220.600 438.800 L218 438.500 L217 437 L218.500 435.200 Z" fill="#e6e9ee"/>
 <path d="M237.400 438.500 h4.200 l-2.100 2.600 Z" fill="#555b66"/>
 <path d="M231.500 439.500 l0.800 -1 l0.800 1" stroke="#c9cdd4" stroke-width="0.500"/>
 <path d="M744.800 440.500 l1.600 -2 l1.600 2 Z" fill="#555b66"/>
</svg>

<!-- BOTTOM -->
<div id="layouttabs" class="abs"></div>
<div id="status" class="abs"></div>
<div id="whiteline" class="abs"></div>
<div class="abs" style="left:938.200px;top:93px;width:1.600px;height:388.200px;background:#3a4354"></div>
<div class="abs" style="left:0;top:447.900px;width:939.800px;height:2.500px;background:#343c4b"></div>
<div class="abs" style="left:939.800px;top:0;width:1.200px;height:483px;background:#f2f3f5"></div>
<svg class="abs" style="left:0;top:449px" width="941" height="20" viewBox="0 449 941 20" fill="none">
 <path d="M5.200 465.200 L10.400 450.600 H46.300 L41.400 465.200 Z" fill="#3d4658"/>
 <path d="M82.200 462.500 L85.700 453.500 M122.300 462.500 L126 453.500 M146.700 462.500 L150.500 453.500" stroke="#4a5366" stroke-width="0.800"/>
 <path d="M132.600 458 H140.300 M136.450 454.200 V461.800" stroke="#f0f3f7" stroke-width="1.400"/>
</svg>
<div class="txt" style="left:14.900px;top:453px;font-size:7.500px;font-weight:bold;color:#f4f6f9">Model</div>
<div class="txt" style="left:51.100px;top:453px;font-size:7.100px;color:#e2e6ec">Layout1</div>
<div class="txt" style="left:91.500px;top:453px;font-size:7.100px;color:#e2e6ec">Layout2</div>
<div class="txt" id="stxt" style="left:3px;top:472.300px;font-size:7.390px;color:#eef0f4">Press ESC or ENTER to exit, or right-click to display shortcut-menu.</div>
</body></html>
